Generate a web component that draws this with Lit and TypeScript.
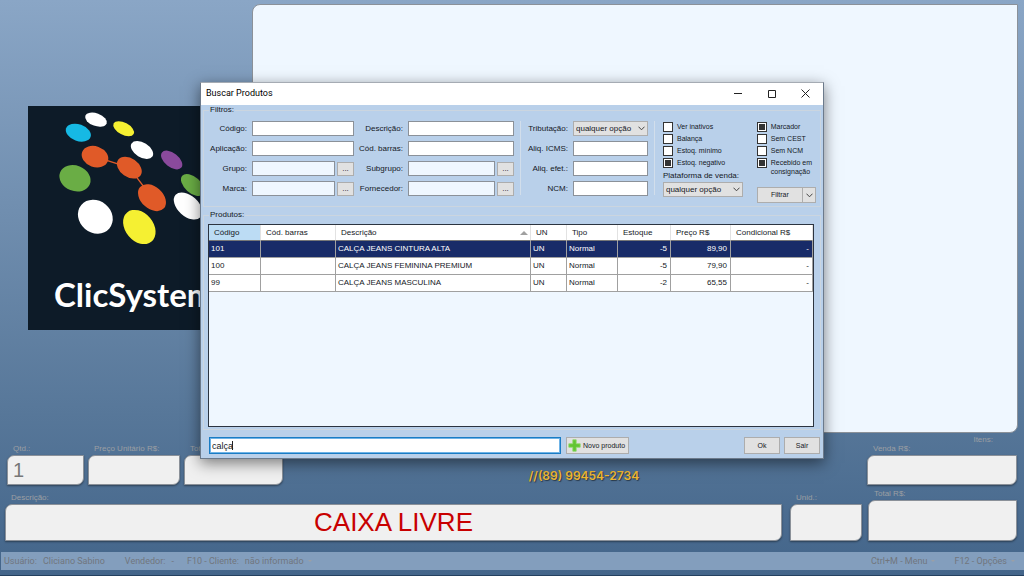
import { LitElement, html, css, svg } from "lit";
import { customElement, state } from "lit/decorators.js";

interface Product {
  code: string;
  barcode: string;
  description: string;
  unit: string;
  kind: string;
  stock: string;
  price: string;
  conditional: string;
}

const PRODUCTS: Product[] = [
  { code: "101", barcode: "", description: "CALÇA JEANS CINTURA ALTA", unit: "UN", kind: "Normal", stock: "-5", price: "89,90", conditional: "-" },
  { code: "100", barcode: "", description: "CALÇA JEANS FEMININA PREMIUM", unit: "UN", kind: "Normal", stock: "-5", price: "79,90", conditional: "-" },
  { code: "99", barcode: "", description: "CALÇA JEANS MASCULINA", unit: "UN", kind: "Normal", stock: "-2", price: "65,55", conditional: "-" },
];

const UI_FONT = css`"Liberation Sans", Arial, sans-serif`;

@customElement("clic-logo")
export class ClicLogo extends LitElement {
  static styles = css`
    :host { display: block; }
    .tile {
      width: 224px;
      height: 224px;
      background: #0d1b28;
      overflow: hidden;
      display: flex;
      flex-direction: column;
    }
    .dots { display: block; width: 224px; height: 164px; flex: none; }
    .name {
      padding-left: 26px;
      color: #fff;
      font: 700 33px/48px Lato, sans-serif;
      white-space: nowrap;
    }
  `;

  private dot(cx: number, cy: number, rx: number, ry: number, angle: number, fill: string) {
    return svg`<ellipse cx=${cx} cy=${cy} rx=${rx} ry=${ry} fill=${fill} transform="rotate(${angle} ${cx} ${cy})"></ellipse>`;
  }

  render() {
    return html`
      <div class="tile">
        <svg class="dots" viewBox="84 78 672 492" aria-hidden="true">
          <polyline points="285,230 388,263 456,353" fill="none" stroke="#e05a28" stroke-width="4"></polyline>
          ${this.dot(288, 119, 34, 19, 20, "#fff")}
          ${this.dot(371, 146, 34, 18, 28, "#f5f032")}
          ${this.dot(235, 158, 39, 25, 20, "#16b9e4")}
          ${this.dot(285, 230, 41, 31, 20, "#e05a28")}
          ${this.dot(426, 210, 37, 22, 32, "#fff")}
          ${this.dot(388, 263, 41, 28, 35, "#e05a28")}
          ${this.dot(515, 240, 37, 21, 38, "#8a4a9c")}
          ${this.dot(225, 295, 48, 38, 22, "#6aad45")}
          ${this.dot(578, 315, 42, 24, 42, "#6aad45")}
          ${this.dot(456, 353, 48, 33, 42, "#e05a28")}
          ${this.dot(564, 378, 50, 31, 42, "#fff")}
          ${this.dot(286, 410, 55, 48, 40, "#fff")}
          ${this.dot(418, 441, 57, 42, 50, "#f5f032")}
        </svg>
        <span class="name">ClicSystem</span>
      </div>
    `;
  }
}

@customElement("product-search")
export class ProductSearch extends LitElement {
  @state() private selected = 0;

  static styles = css`
    :host {
      display: flex;
      flex-direction: column;
      box-sizing: border-box;
      border: 1px solid #6c7a8b;
      border-top-color: #a5abb3;
      background: #b9d0ea;
      color: #14181e;
      font: 8px/12px ${UI_FONT};
      box-shadow: 0 4px 14px rgba(0, 0, 0, 0.5);
    }
    input, select, button { font: inherit; color: inherit; box-sizing: border-box; margin: 0; border-radius: 0; }
    .title-bar { display: flex; align-items: flex-start; height: 22px; padding-right: 1px; box-sizing: border-box; flex: none; background: #fff; }
    .title { flex: 1; margin: 0; padding-left: 5px; font: 400 9px/21px Roboto, sans-serif; color: #000; }
    .win-btn { width: 34px; height: 20px; padding: 0; border: 0; background: none; display: grid; place-items: center; }
    .win-btn svg { width: 9px; height: 9px; fill: none; stroke: #222; stroke-width: 1; }
    .group { margin: 0; padding: 0; border: 1px solid #cbd5df; min-width: 0; }
    .group legend { padding: 0 1px; margin-left: 5px; height: 10px; line-height: 10px; }
    .filters { margin: 0 2px; height: 102px; box-sizing: border-box; }
    .filter-row { display: flex; padding: 6px 4px 0 5px; }
    .fields { display: grid; grid-auto-rows: 15px; row-gap: 5px; column-gap: 5px; align-content: start; align-items: center; }
    .f1 { grid-template-columns: 38px 102px; margin-right: 5px; }
    .f2 { grid-template-columns: 44px 106px; }
    .f3 { grid-template-columns: 41px 75px; }
    .fields label { text-align: right; white-space: nowrap; }
    .text { width: 100%; min-width: 0; height: 15px; border: 1px solid #8b9199; padding: 0 2px; background: #fff; }
    .text[readonly] { background: #eff7ff; }
    .pick { display: flex; align-items: center; gap: 2px; }
    .pick .text { flex: 1; }
    .btn { padding: 0; background: #e1e1e1; border: 1px solid #adadad; }
    .dots { width: 17px; height: 14px; line-height: 10px; flex: none; }
    .rule { width: 1px; height: 74px; background: #d2deeb; margin: 0 6px; }
    .rule.wide { margin-right: 8px; }
    .combo { position: relative; display: block; }
    .combo select { appearance: none; display: block; width: 100%; height: 15px; padding: 0 2px; background: #e1e1e1; border: 1px solid #adadad; }
    .combo svg { position: absolute; right: 3px; top: 5px; pointer-events: none; }
    .chev { width: 7px; height: 5px; fill: none; stroke: #444; stroke-width: 1; }
    .checks { display: flex; flex-direction: column; gap: 2px; width: 95px; padding-top: 1px; font: 7px/10px ${UI_FONT}; }
    .check { display: flex; gap: 4px; height: 10px; white-space: nowrap; }
    .check.tall { height: 18px; line-height: 9px; }
    .check input { appearance: none; width: 10px; height: 10px; flex: none; border: 1px solid #333; background: #fff; }
    .check input:indeterminate { background: #333 content-box; padding: 1px; box-shadow: inset 0 0 0 1px #fff; }
    .platform { display: block; height: 10px; font-size: 8px; line-height: 12px; white-space: nowrap; }
    .checks .combo { width: 80px; font-size: 8px; }
    .checks.last { width: 60px; }
    .split { display: flex; margin-top: 9px; }
    .split .btn { height: 16px; }
    .split .main { flex: 1; }
    .split .more { width: 13px; border-left: 0; display: grid; place-items: center; }
    .products { flex: 1; display: flex; flex-direction: column; margin: 3px 2px 0 2px; min-height: 0; }
    .grid-box { height: 204px; margin: 4px 6px 2px 4px; box-sizing: border-box; border: 1px solid #2c3440; background: #eff7ff; }
    table { width: 100%; border-collapse: separate; border-spacing: 0; table-layout: fixed; }
    th { height: 16px; padding: 0 0 0 5px; box-sizing: border-box; text-align: left; font-weight: 400; background: #fff; border-right: 1px solid #e2e2e2; border-bottom: 1px solid #777; white-space: nowrap; }
    th.sorted { background: #bcdcf4; }
    th .cell { display: flex; justify-content: space-between; align-items: center; padding-right: 2px; }
    .sort { width: 8px; height: 4px; fill: #a0a0a0; }
    td { height: 17px; padding: 0 3px 0 2px; box-sizing: border-box; background: #fff; border-right: 1px solid #a0a0a0; border-bottom: 1px solid #a0a0a0; white-space: nowrap; }
    tr.on td { background: #182b68; color: #fff; }
    .num { text-align: right; }
    .c1 { width: 52px; } .c2 { width: 75px; } .c3 { width: 195px; } .c4 { width: 36px; }
    .c5 { width: 51px; } .c6 { width: 53px; } .c7 { width: 60px; }
    .footer { display: flex; align-items: center; padding: 7px 3px 4px 8px; gap: 5px; font: 7px/10px ${UI_FONT}; }
    .search { position: relative; display: flex; width: 352px; }
    .query { width: 100%; height: 17px; border: 1px solid #1a7cc4; padding: 0 2px; outline: 0; background: #fff; font-size: 9px; line-height: 12px; box-shadow: inset 0 0 0 1px #6fb3e6; }
    .caret { position: absolute; left: 23px; top: 4px; width: 1px; height: 9px; background: #222; }
    .new { display: flex; align-items: center; gap: 2px; width: 63px; height: 17px; padding: 0 1px; white-space: nowrap; }
    .new svg { width: 13px; height: 13px; flex: none; }
    .space { flex: 1; }
    .actions { display: flex; gap: 4px; }
    .act { width: 36px; height: 17px; }
  `;

  private chevron() {
    return html`<svg class="chev" viewBox="0 0 7 5" aria-hidden="true"><path d="M0.5 0.7 L3.5 3.8 L6.5 0.7"></path></svg>`;
  }

  private textField(id: string, label: string, pick = false) {
    const box = html`<input class="text" id=${id} type="text" ?readonly=${pick} />`;
    return html`
      <label for=${id}>${label}</label>
      ${pick ? html`<span class="pick">${box}<button class="btn dots" type="button" aria-label="Selecionar ${label}">...</button></span>` : box}
    `;
  }

  private combo(id: string) {
    return html`<span class="combo"><select id=${id}><option>qualquer opção</option></select>${this.chevron()}</span>`;
  }

  private check(label: unknown, mixed = false, tall = false) {
    return html`<label class="check ${tall ? "tall" : ""}"><input type="checkbox" .indeterminate=${mixed} /><span>${label}</span></label>`;
  }

  render() {
    return html`
      <header class="title-bar">
        <h1 class="title">Buscar Produtos</h1>
        <button class="win-btn" aria-label="Minimizar"><svg viewBox="0 0 9 9"><path d="M1 4.5H9"></path></svg></button>
        <button class="win-btn" aria-label="Maximizar"><svg viewBox="0 0 9 9"><path d="M1.5 1.5H8.5V8.5H1.5Z"></path></svg></button>
        <button class="win-btn" aria-label="Fechar"><svg viewBox="0 0 9 9"><path d="M0.5 0.5L8.5 8.5M8.5 0.5L0.5 8.5"></path></svg></button>
      </header>

      <fieldset class="group filters">
        <legend>Filtros:</legend>
        <div class="filter-row">
          <div class="fields f1">
            ${this.textField("code", "Código:")}
            ${this.textField("application", "Aplicação:")}
            ${this.textField("group", "Grupo:", true)}
            ${this.textField("brand", "Marca:", true)}
          </div>
          <div class="fields f2">
            ${this.textField("description", "Descrição:")}
            ${this.textField("barcode", "Cód. barras:")}
            ${this.textField("subgroup", "Subgrupo:", true)}
            ${this.textField("supplier", "Fornecedor:", true)}
          </div>
          <div class="rule"></div>
          <div class="fields f3">
            <label for="tax">Tributação:</label>${this.combo("tax")}
            ${this.textField("icms", "Aliq. ICMS:")}
            ${this.textField("rate", "Aliq. efet.:")}
            ${this.textField("ncm", "NCM:")}
          </div>
          <div class="rule wide"></div>
          <div class="checks">
            ${this.check("Ver inativos")}
            ${this.check("Balança")}
            ${this.check("Estoq. mínimo")}
            ${this.check("Estoq. negativo", true)}
            <label class="platform" for="platform">Plataforma de venda:</label>
            ${this.combo("platform")}
          </div>
          <div class="checks last">
            ${this.check("Marcador", true)}
            ${this.check("Sem CEST")}
            ${this.check("Sem NCM")}
            ${this.check(html`Recebido em<br />consignação`, true, true)}
            <div class="split">
              <button class="btn main" type="button">Filtrar</button>
              <button class="btn more" type="button" aria-label="Mais filtros">${this.chevron()}</button>
            </div>
          </div>
        </div>
      </fieldset>

      <fieldset class="group products">
        <legend>Produtos:</legend>
        <div class="grid-box">
          <table>
            <thead>
              <tr>
                <th class="c1 sorted">Código</th>
                <th class="c2">Cód. barras</th>
                <th class="c3"><span class="cell">Descrição<svg class="sort" viewBox="0 0 8 4"><path d="M0 4L4 0L8 4Z"></path></svg></span></th>
                <th class="c4">UN</th>
                <th class="c5">Tipo</th>
                <th class="c6">Estoque</th>
                <th class="c7">Preço R$</th>
                <th>Condicional R$</th>
              </tr>
            </thead>
            <tbody>
              ${PRODUCTS.map(
                (p, i) => html`
                  <tr class=${i === this.selected ? "on" : ""} @click=${() => (this.selected = i)}>
                    <td>${p.code}</td>
                    <td>${p.barcode}</td>
                    <td>${p.description}</td>
                    <td>${p.unit}</td>
                    <td>${p.kind}</td>
                    <td class="num">${p.stock}</td>
                    <td class="num">${p.price}</td>
                    <td class="num">${p.conditional}</td>
                  </tr>
                `
              )}
            </tbody>
          </table>
        </div>
      </fieldset>

      <footer class="footer">
        <span class="search">
          <input class="query" type="text" aria-label="Buscar" .value=${"calça"} />
          <span class="caret"></span>
        </span>
        <button class="btn new" type="button">
          <svg viewBox="0 0 13 13" aria-hidden="true">
            <path d="M4.8 0.8H8.2V4.8H12.2V8.2H8.2V12.2H4.8V8.2H0.8V4.8H4.8Z" fill="#62c432" stroke="#8bd968" stroke-width="0.8"></path>
          </svg>
          Novo produto
        </button>
        <span class="space"></span>
        <span class="actions">
          <button class="btn act" type="button">Ok</button>
          <button class="btn act" type="button">Sair</button>
        </span>
      </footer>
    `;
  }
}

@customElement("app-root")
export class AppRoot extends LitElement {
  static styles = css`
    :host {
      display: flex;
      flex-direction: column;
      position: relative;
      box-sizing: border-box;
      min-height: 100vh;
      overflow: hidden;
      padding-top: 4px;
      border-bottom: 1px solid #24405f;
      background: linear-gradient(#8aa6c6, #577799 72%, #43658a);
      color: #9c9fa3;
      font: 8px/12px ${UI_FONT};
    }
    .stage { flex: 1; display: flex; padding-right: 6px; }
    .brand { width: 224px; flex: none; padding: 102px 0 0 28px; }
    .receipt { flex: 1; background: #eff7ff; border: 1px solid #8b9199; border-radius: 8px 0 8px 0; }
    .items { text-align: right; padding: 1px 31px 0 0; height: 8px; line-height: 12px; }
    .row { display: flex; align-items: flex-end; gap: 4px; padding: 0 7px; }
    .row.second { padding-left: 5px; margin-top: 2px; gap: 6px; }
    .field { display: flex; flex-direction: column; }
    .field label { padding-left: 6px; height: 13px; line-height: 14px; white-space: nowrap; }
    .field input {
      width: 100%;
      height: 30px;
      box-sizing: border-box;
      margin: 0;
      padding: 0 5px;
      border: 1px solid #8b9199;
      border-radius: 7px 0 7px 0;
      background: #f0f0f0;
      color: #777;
      font: 20px/24px ${UI_FONT};
      box-shadow: 0 1px 2px rgba(0, 0, 0, 0.4);
    }
    .qty { width: 77px; }
    .unit-price { width: 92px; }
    .total-item { width: 99px; }
    .phone {
      flex: 1;
      padding: 0 0 1px 18px;
      text-align: center;
      color: #f2b92f;
      font: 600 12px/16px Inter, sans-serif;
      text-shadow: 1px 1px 1px rgba(0, 0, 0, 0.5);
    }
    .side { width: 150px; }
    .desc { flex: 1; margin-right: 2px; }
    .field .headline { height: 37px; color: #c80000; text-align: center; font-size: 26px; line-height: 30px; }
    .unit { width: 72px; }
    .unit input { height: 37px; }
    .total { width: 149px; }
    .total input { height: 41px; }
    .status {
      display: flex;
      align-items: center;
      height: 18px;
      margin: 11px 0 5px 1px;
      padding: 0 9px 0 3px;
      background: #839ebd;
      color: #71767d;
      font: 9px/14px Roboto, sans-serif;
      white-space: nowrap;
    }
    .status .seller { margin-left: 20px; }
    .status .client { margin-left: 13px; }
    .status .menu { margin-left: auto; }
    .status .options { margin-left: 19px; }
    .value { margin-left: 6px; }
    .drop { width: 4px; height: 2px; margin-left: 4px; vertical-align: 2px; fill: #9b9fa5; }
    .dialog { position: absolute; left: 200px; top: 82px; width: 624px; height: 377px; }
  `;

  private drop() {
    return html`<svg class="drop" viewBox="0 0 4 2" aria-hidden="true"><path d="M0 0H4L2 2Z"></path></svg>`;
  }

  render() {
    return html`
      <main class="stage">
        <div class="brand"><clic-logo></clic-logo></div>
        <section class="receipt" aria-label="Cupom"></section>
      </main>
      <div class="items">Itens:</div>
      <section class="row">
        <div class="field qty"><label for="qty">Qtd.:</label><input id="qty" .value=${"1"} /></div>
        <div class="field unit-price"><label for="unit-price">Preço Unitário R$:</label><input id="unit-price" /></div>
        <div class="field total-item"><label for="total-item">Total R$:</label><input id="total-item" /></div>
        <div class="phone">//(89) 99454-2734</div>
        <div class="field side"><label for="sale">Venda R$:</label><input id="sale" /></div>
      </section>
      <section class="row second">
        <div class="field desc"><label for="desc">Descrição:</label><input class="headline" id="desc" .value=${"CAIXA LIVRE"} /></div>
        <div class="field unit"><label for="unit">Unid.:</label><input id="unit" /></div>
        <div class="field total"><label for="total">Total R$:</label><input id="total" /></div>
      </section>
      <footer class="status">
        <span>Usuário:<span class="value">Cliciano Sabino</span></span>
        <span class="seller">Vendedor:<span class="value">-</span></span>
        <span class="client">F10 - Cliente:<span class="value">não informado</span>${this.drop()}</span>
        <span class="menu">Ctrl+M - Menu${this.drop()}</span>
        <span class="options">F12 - Opções${this.drop()}</span>
      </footer>
      <product-search class="dialog" role="dialog" aria-label="Buscar Produtos"></product-search>
    `;
  }
}
